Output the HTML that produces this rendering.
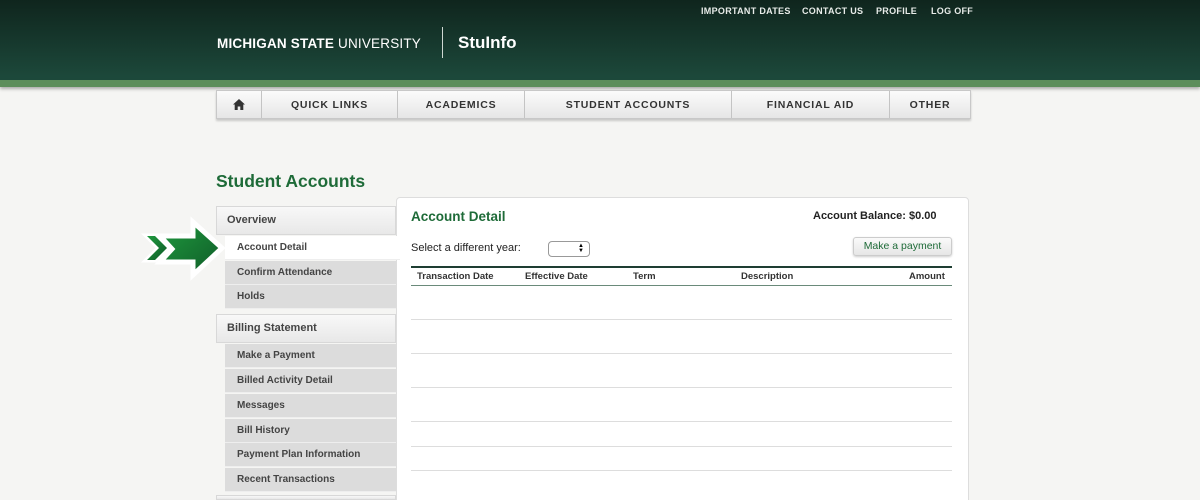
<!DOCTYPE html>
<html style="width:1200px;height:500px;overflow:hidden"><head><meta charset="utf-8"><style>
*{margin:0;padding:0;box-sizing:border-box}
body{width:1200px;height:500px;overflow:hidden;background:#f5f5f3;font-family:"Liberation Sans",sans-serif;position:relative}
.hdr{position:absolute;left:0;top:0;width:1200px;height:81px;background:linear-gradient(#0f251d,#1d4a3c)}
.stripe{position:absolute;left:0;top:80px;width:1200px;height:7px;background:#5d8e5c;box-shadow:0 2px 3px rgba(0,0,0,.3)}
.top{position:absolute;top:6px;font-size:9px;font-weight:bold;color:#e8ece9;letter-spacing:.3px}
.logo{position:absolute;left:217px;top:36px;color:#fff;font-size:13.5px;letter-spacing:.2px}
.sep{position:absolute;left:442px;top:27px;width:1px;height:31px;background:#cfd8d3}
.stu{position:absolute;left:458px;top:33px;color:#fff;font-size:17px;font-weight:bold}
.nav{position:absolute;left:216px;top:90px;width:755px;height:29px;background:linear-gradient(#fbfbfb,#e6e6e6);border:1px solid #c8c8c8;box-shadow:0 2px 2px rgba(0,0,0,.18);display:flex}
.nav div{border-right:1px solid #c4c4c4;height:27px;line-height:28px;text-align:center;font-size:10.5px;font-weight:bold;letter-spacing:.8px;color:#333}
.nav div:last-child{border-right:0}
h1{position:absolute;left:216px;top:171px;font-size:17.5px;color:#1e6b38;font-weight:bold}
.sh{position:absolute;left:216px;width:180px;height:29px;background:linear-gradient(#f8f8f8,#e8e8e8);border:1px solid #d8d8d8;font-size:11px;font-weight:bold;color:#444;padding-left:10px;line-height:27px}
.si{position:absolute;left:225px;width:171px;height:24px;background:#dcdcdc;border-bottom:1px solid #eee;font-size:10px;font-weight:bold;color:#444;padding-left:12px;line-height:24px}
.panel{position:absolute;left:396px;top:197px;width:573px;height:310px;background:#fff;border:1px solid #ddd;border-radius:4px}
.l{position:absolute;left:411px;width:541px;height:1px;background:#ddd}
.th{position:absolute;top:271px;font-size:9.5px;font-weight:bold;color:#333}
</style></head><body>
<div class="hdr"></div><div class="stripe"></div>
<div class="top" style="left:701px">IMPORTANT DATES</div>
<div class="top" style="left:802px">CONTACT US</div>
<div class="top" style="left:876px">PROFILE</div>
<div class="top" style="left:931px">LOG OFF</div>
<div class="logo"><b>MICHIGAN STATE</b> UNIVERSITY</div>
<div class="sep"></div><div class="stu">StuInfo</div>
<div class="nav">
<div style="width:45px"><svg width="12" height="11" viewBox="0 0 12 11" style="margin-top:8px"><path d="M6 0 L12 5.5 H10.3 V11 H7.3 V7.5 H4.7 V11 H1.7 V5.5 H0 Z" fill="#333"/></svg></div>
<div style="width:136px">QUICK LINKS</div>
<div style="width:127px">ACADEMICS</div>
<div style="width:207px">STUDENT ACCOUNTS</div>
<div style="width:158px">FINANCIAL AID</div>
<div style="width:80px">OTHER</div>
</div>
<h1>Student Accounts</h1>
<div class="panel"></div>
<div class="sh" style="top:206px">Overview</div>
<div class="si" style="top:236px;background:#fff;width:175px">Account Detail</div>
<div class="si" style="top:261px">Confirm Attendance</div>
<div class="si" style="top:285px">Holds</div>
<div class="sh" style="top:314px">Billing Statement</div>
<div class="si" style="top:344px">Make a Payment</div>
<div class="si" style="top:369px">Billed Activity Detail</div>
<div class="si" style="top:394px">Messages</div>
<div class="si" style="top:419px">Bill History</div>
<div class="si" style="top:443px">Payment Plan Information</div>
<div class="si" style="top:468px">Recent Transactions</div>
<div class="sh" style="top:495px;height:5px"></div>
<svg style="position:absolute;left:0;top:0" width="240" height="300">
<defs><linearGradient id="g" x1="0" y1="0" x2="1" y2="1"><stop offset="0" stop-color="#1f9a3e"/><stop offset="1" stop-color="#0f5a28"/></linearGradient></defs>
<g stroke="#fff" stroke-width="5" stroke-linejoin="miter" fill="url(#g)">
<polygon points="147,236 155,236 167,248 155,260 147,260 159,248"/>
<polygon points="160,236 193,236 193,222 222,248 193,275 193,262 160,262 172,249"/>
</g>
<polygon fill="url(#g)" points="147,236 155,236 167,248 155,260 147,260 159,248"/>
</svg>
<div style="position:absolute;left:411px;top:209px;font-size:13.5px;font-weight:bold;color:#1e6b38">Account Detail</div>
<div style="position:absolute;left:813px;top:210px;font-size:11px;font-weight:bold;color:#222">Account Balance: $0.00</div>
<div style="position:absolute;left:411px;top:242px;font-size:11px;color:#222">Select a different year:</div>
<div style="position:absolute;left:548px;top:241px;width:42px;height:16px;border:1px solid #999;border-radius:4px;background:#fff;font-size:6px;text-align:right;padding-right:5px;padding-top:2px;line-height:5px">&#9650;<br>&#9660;</div>
<div style="position:absolute;left:853px;top:237px;width:99px;height:19px;border:1px solid #ccc;border-radius:3px;background:linear-gradient(#fafafa,#e6e6e6);font-size:10.5px;color:#1e6b38;text-align:center;line-height:17px;box-shadow:0 1px 2px rgba(0,0,0,.2)">Make a payment</div>
<div class="l" style="top:266px;height:2px;background:#1e3e32"></div>
<div class="th" style="left:417px">Transaction Date</div>
<div class="th" style="left:525px">Effective Date</div>
<div class="th" style="left:633px">Term</div>
<div class="th" style="left:741px">Description</div>
<div class="th" style="left:909px">Amount</div>
<div class="l" style="top:285px;background:#6a8a7a"></div>
<div class="l" style="top:319px"></div>
<div class="l" style="top:353px"></div>
<div class="l" style="top:387px"></div>
<div class="l" style="top:421px"></div>
<div class="l" style="top:446px"></div>
<div class="l" style="top:470px"></div>
</body></html>
